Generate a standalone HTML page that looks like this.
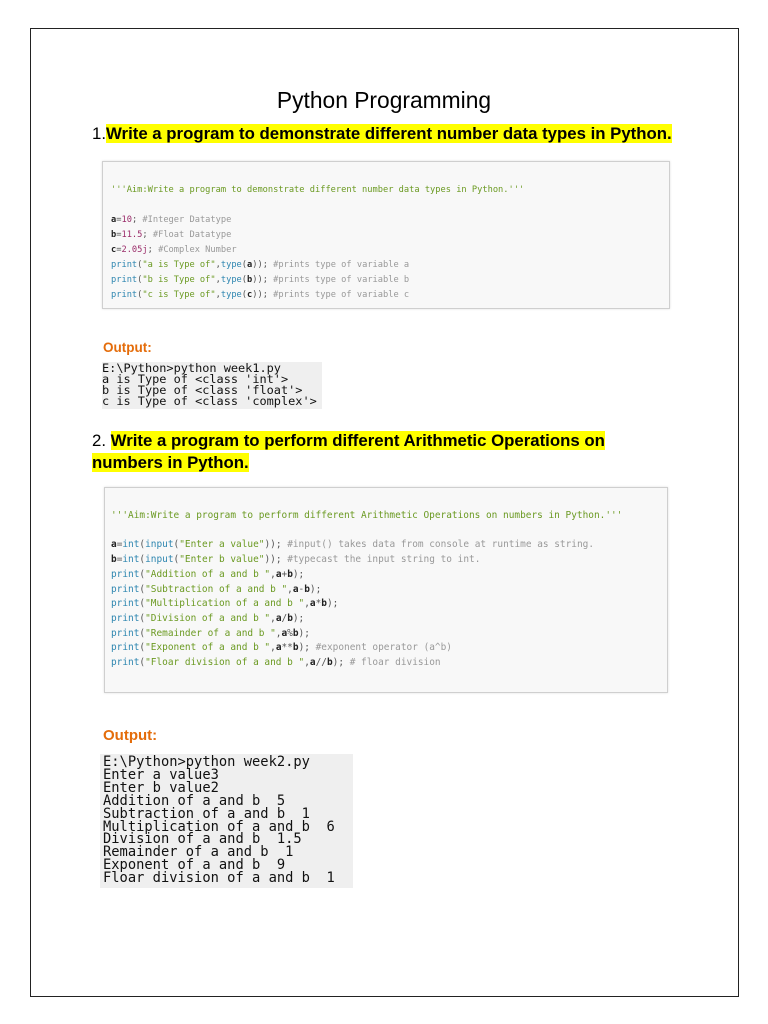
<!DOCTYPE html>
<html><head><meta charset="utf-8"><style>
body{margin:0;width:768px;height:1024px;background:#fff;position:relative;font-family:"Liberation Sans",Arial,sans-serif;overflow:hidden}
.a{position:absolute;white-space:pre}
.frame{position:absolute;left:30px;top:28px;width:707px;height:967px;border:1px solid #222}
.hl{background:#ffff00}
.code{position:absolute;background:#f8f8f8;border:1px solid #cfcfcf;box-shadow:0 0 2px #ddd}
.c{font-family:"DejaVu Sans Mono","Liberation Mono",monospace;color:#555}
.s{color:#6b9a22}.k{color:#2e86b0}.n{color:#9b2d6a}.m{color:#999}.v{color:#222;font-weight:bold}
.out{position:absolute;background:#efefef;font-family:"DejaVu Sans Mono","Liberation Mono",monospace;color:#111;white-space:pre}
.lbl{position:absolute;color:#e46c0a;font-weight:bold}
</style></head><body>
<div class="frame"></div>
<div class="a" style="left:0;width:768px;text-align:center;top:87px;font-size:22.8px;color:#000">Python Programming</div>
<div class="a" style="left:92px;top:124px;font-size:16.8px;color:#000">1.<span class="hl" style="font-weight:bold">Write a program to demonstrate different number data types in Python.</span></div>

<div class="code" style="left:102px;top:161px;width:566px;height:146px"></div>
<div class="a c" style="left:111px;top:183px;font-size:8.7px;line-height:15px"><span class="s">'''Aim:Write a program to demonstrate different number data types in Python.'''</span>

<span class="v">a</span>=<span class="n">10</span>; <span class="m">#Integer Datatype</span>
<span class="v">b</span>=<span class="n">11.5</span>; <span class="m">#Float Datatype</span>
<span class="v">c</span>=<span class="n">2.05j</span>; <span class="m">#Complex Number</span>
<span class="k">print</span>(<span class="s">"a is Type of"</span>,<span class="k">type</span>(<span class="v">a</span>)); <span class="m">#prints type of variable a</span>
<span class="k">print</span>(<span class="s">"b is Type of"</span>,<span class="k">type</span>(<span class="v">b</span>)); <span class="m">#prints type of variable b</span>
<span class="k">print</span>(<span class="s">"c is Type of"</span>,<span class="k">type</span>(<span class="v">c</span>)); <span class="m">#prints type of variable c</span></div>

<div class="lbl" style="left:103px;top:340px;font-size:13.5px">Output:</div>
<div class="out" style="left:102px;top:362px;width:220px;height:46px;font-size:11.9px;line-height:11px;padding-top:1px">E:\Python>python week1.py
a is Type of &lt;class 'int'&gt;
b is Type of &lt;class 'float'&gt;
c is Type of &lt;class 'complex'&gt;</div>

<div class="a" style="left:92px;top:430px;font-size:16.8px;line-height:22px;color:#000">2. <span class="hl" style="font-weight:bold">Write a program to perform different Arithmetic Operations on</span>
<span class="hl" style="font-weight:bold">numbers in Python.</span></div>

<div class="code" style="left:104px;top:487px;width:562px;height:204px"></div>
<div class="a c" style="left:111px;top:509px;font-size:9.45px;line-height:14.7px"><span class="s">'''Aim:Write a program to perform different Arithmetic Operations on numbers in Python.'''</span>

<span class="v">a</span>=<span class="k">int</span>(<span class="k">input</span>(<span class="s">"Enter a value"</span>)); <span class="m">#input() takes data from console at runtime as string.</span>
<span class="v">b</span>=<span class="k">int</span>(<span class="k">input</span>(<span class="s">"Enter b value"</span>)); <span class="m">#typecast the input string to int.</span>
<span class="k">print</span>(<span class="s">"Addition of a and b "</span>,<span class="v">a</span>+<span class="v">b</span>);
<span class="k">print</span>(<span class="s">"Subtraction of a and b "</span>,<span class="v">a</span>-<span class="v">b</span>);
<span class="k">print</span>(<span class="s">"Multiplication of a and b "</span>,<span class="v">a</span>*<span class="v">b</span>);
<span class="k">print</span>(<span class="s">"Division of a and b "</span>,<span class="v">a</span>/<span class="v">b</span>);
<span class="k">print</span>(<span class="s">"Remainder of a and b "</span>,<span class="v">a</span>%<span class="v">b</span>);
<span class="k">print</span>(<span class="s">"Exponent of a and b "</span>,<span class="v">a</span>**<span class="v">b</span>); <span class="m">#exponent operator (a^b)</span>
<span class="k">print</span>(<span class="s">"Floar division of a and b "</span>,<span class="v">a</span>//<span class="v">b</span>); <span class="m"># floar division</span></div>

<div class="lbl" style="left:103px;top:727px;font-size:15px">Output:</div>
<div class="out" style="left:100px;top:754px;width:253px;height:134px;font-size:13.75px;line-height:12.9px;padding-left:3px;box-sizing:border-box;padding-top:2px">E:\Python>python week2.py
Enter a value3
Enter b value2
Addition of a and b  5
Subtraction of a and b  1
Multiplication of a and b  6
Division of a and b  1.5
Remainder of a and b  1
Exponent of a and b  9
Floar division of a and b  1</div>
</body></html>
